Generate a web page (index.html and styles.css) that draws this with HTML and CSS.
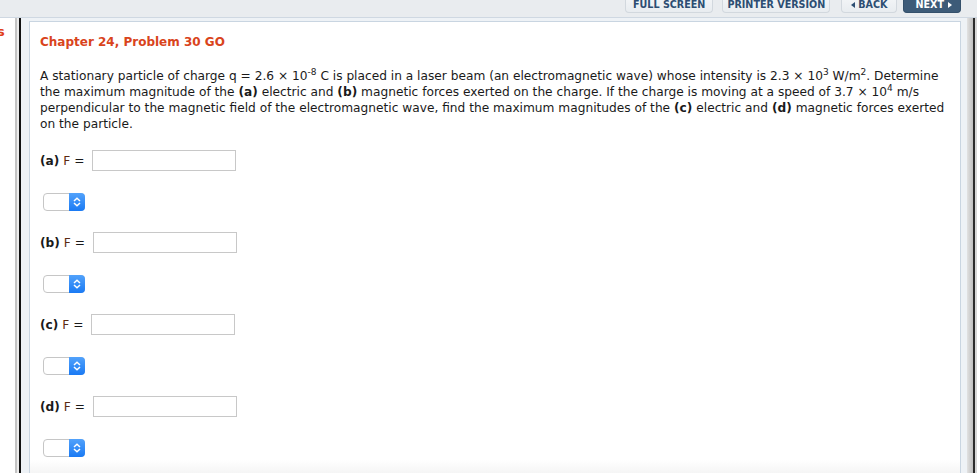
FILE: index.html
```html
<!DOCTYPE html>
<html>
<head>
  <title>Chapter 24, Problem 30 GO</title>
  <link rel="stylesheet" href="styles.css">
</head>
<body>
  <div class="topbar">
    <a class="tbtn">FULL SCREEN</a>
    <a class="tbtn print">PRINTER VERSION</a>
    <a class="tbtn back"><span class="tri-l"></span>BACK</a>
    <a class="tbtn next">NEXT<span class="tri-r"></span></a>
  </div>
  <div class="main">
    <div class="leftcol">
      <div class="cut">s</div>
    </div>
    <div class="rule-grey"></div>
    <div class="rule-light"></div>
    <div class="rule-dark"></div>
    <div class="gutter">
      <div class="panel">
        <h3 class="title">Chapter 24, Problem 30 GO</h3>
        <p class="question">A stationary particle of charge q = 2.6 &times; 10<sup>-8</sup> C is placed in a laser beam (an electromagnetic wave) whose intensity is 2.3 &times; 10<sup>3</sup> W/m<sup>2</sup>. Determine the maximum magnitude of the <b>(a)</b> electric and <b>(b)</b> magnetic forces exerted on the charge. If the charge is moving at a speed of 3.7 &times; 10<sup>4</sup> m/s perpendicular to the magnetic field of the electromagnetic wave, find the maximum magnitudes of the <b>(c)</b> electric and <b>(d)</b> magnetic forces exerted on the particle.</p>

        <div class="part">
          <div class="row"><b>(a)</b>&nbsp;<span class="var">F</span>&nbsp;=&nbsp;<input class="answer" type="text"></div>
          <div class="unit"><select></select><span class="spin"><svg width="8" height="10" viewBox="0 0 8 10"><path d="M1 4 L4 1.2 L7 4 M1 6 L4 8.8 L7 6" fill="none" stroke="#fff" stroke-width="1.5"/></svg></span></div>
        </div>
        <div class="part">
          <div class="row"><b>(b)</b>&nbsp;<span class="var">F</span>&nbsp;=&nbsp;<input class="answer" type="text"></div>
          <div class="unit"><select></select><span class="spin"><svg width="8" height="10" viewBox="0 0 8 10"><path d="M1 4 L4 1.2 L7 4 M1 6 L4 8.8 L7 6" fill="none" stroke="#fff" stroke-width="1.5"/></svg></span></div>
        </div>
        <div class="part">
          <div class="row"><b>(c)</b>&nbsp;<span class="var">F</span>&nbsp;=&nbsp;<input class="answer" type="text"></div>
          <div class="unit"><select></select><span class="spin"><svg width="8" height="10" viewBox="0 0 8 10"><path d="M1 4 L4 1.2 L7 4 M1 6 L4 8.8 L7 6" fill="none" stroke="#fff" stroke-width="1.5"/></svg></span></div>
        </div>
        <div class="part">
          <div class="row"><b>(d)</b>&nbsp;<span class="var">F</span>&nbsp;=&nbsp;<input class="answer" type="text"></div>
          <div class="unit"><select></select><span class="spin"><svg width="8" height="10" viewBox="0 0 8 10"><path d="M1 4 L4 1.2 L7 4 M1 6 L4 8.8 L7 6" fill="none" stroke="#fff" stroke-width="1.5"/></svg></span></div>
        </div>
      </div>
    </div>
    <div class="rcol-grey"></div>
    <div class="rcol-dark"></div>
    <div class="rcol-end"></div>
  </div>
</body>
</html>
```

FILE: styles.css
```css
body {
  margin: 0;
  padding: 0;
  font-family: "DejaVu Sans", Verdana, sans-serif;
  font-size: 12px;
  color: #1a1a1a;
  overflow: hidden;
  height: 473px;
}

.topbar {
  height: 17px;
  background-color: #e9ecef;
  border-bottom: 1px solid #cfd8e2;
  display: flex;
  justify-content: flex-end;
  align-items: flex-end;
  padding-right: 16px;
  gap: 9px;
}

.tbtn {
  height: 17px;
  margin-bottom: 4px;
  padding: 0 7px 2px 7px;
  box-sizing: border-box;
  border: 1px solid #d2d8de;
  border-top: none;
  border-radius: 0 0 4px 4px;
  background: linear-gradient(#f4f6f8, #e8ecf0);
  color: #2c4d72;
  font-weight: bold;
  font-size: 9.6px;
  display: flex;
  align-items: flex-end;
  line-height: 11px;
}

.tbtn.print {
  padding: 0 4px 2px 4px;
}

.tbtn.back {
  padding-left: 9px;
  padding-right: 9px;
  margin-left: 2px;
}

.tbtn.next {
  background: #3d5b78;
  border-color: #34506b;
  color: #fff;
  margin-left: -3px;
  padding: 0 8px 2px 11px;
}

.tri-l {
  width: 0;
  height: 0;
  border-top: 3px solid transparent;
  border-bottom: 3px solid transparent;
  border-right: 4px solid #2c4d72;
  margin: 0 3px 2px 0;
}

.tri-r {
  width: 0;
  height: 0;
  border-top: 3px solid transparent;
  border-bottom: 3px solid transparent;
  border-left: 4px solid #fff;
  margin: 0 0 2px 4px;
}

.main {
  display: flex;
  height: 455px;
}

.leftcol {
  width: 15px;
  background-color: #fff;
}

.cut {
  color: #e0401a;
  font-weight: bold;
  font-size: 13px;
  margin: 6px 0 0 -3px;
}

.rule-grey {
  width: 2px;
  background-color: #c4c4c4;
}

.rule-light {
  width: 2px;
  background-color: #ececec;
}

.rule-dark {
  width: 2px;
  background-color: #111;
}

.gutter {
  flex: 1;
  background-color: #eef2f6;
  padding: 3px 6px 0 8px;
}

.panel {
  height: 100%;
  box-sizing: border-box;
  background: linear-gradient(#fff 0, #fff 438px, #f2f2f2 455px);
  border: 1px solid #c9d5e1;
  border-bottom: none;
  padding: 0 10px 0 10px;
}

.title {
  margin: 0;
  padding-top: 12px;
  color: #d9441c;
  font-size: 12px;
  line-height: 16px;
}

.question {
  margin: 18px 0 0 0;
  line-height: 16px;
  font-size: 12.2px;
}

.question sup {
  font-size: 9px;
  line-height: 0;
  vertical-align: 5px;
}

.part {
  display: flex;
  flex-direction: column;
  align-items: flex-start;
}

.part:first-of-type {
  margin-top: 18px;
}

.row {
  display: flex;
  align-items: center;
  height: 21px;
  font-size: 12.2px;
}

.var {
  color: #5a2a10;
}

.answer {
  width: 144px;
  height: 21px;
  box-sizing: border-box;
  border: 1px solid #c8c8c8;
  margin: 0 0 0 4px;
  padding: 0 4px;
  font-family: inherit;
}

.unit {
  position: relative;
  margin: 22px 0 21px 3px;
  width: 42px;
  height: 18px;
}

.unit select {
  appearance: none;
  -webkit-appearance: none;
  width: 42px;
  height: 18px;
  border: 1px solid #c6c6c6;
  border-radius: 4px;
  background: #fff;
  margin: 0;
  padding: 0;
  display: block;
}

.spin {
  position: absolute;
  top: 0;
  right: 0;
  width: 16px;
  height: 18px;
  border-radius: 0 4px 4px 0;
  background: linear-gradient(#52a2fb, #1a7af4);
  display: flex;
  align-items: center;
  justify-content: center;
}

.rcol-grey {
  width: 6px;
  background: linear-gradient(90deg, #e2e2e2, #bdbdbd);
}

.rcol-dark {
  width: 2px;
  background-color: #2a2a2a;
}

.rcol-end {
  width: 2px;
  background-color: #d6d6d6;
}
```
